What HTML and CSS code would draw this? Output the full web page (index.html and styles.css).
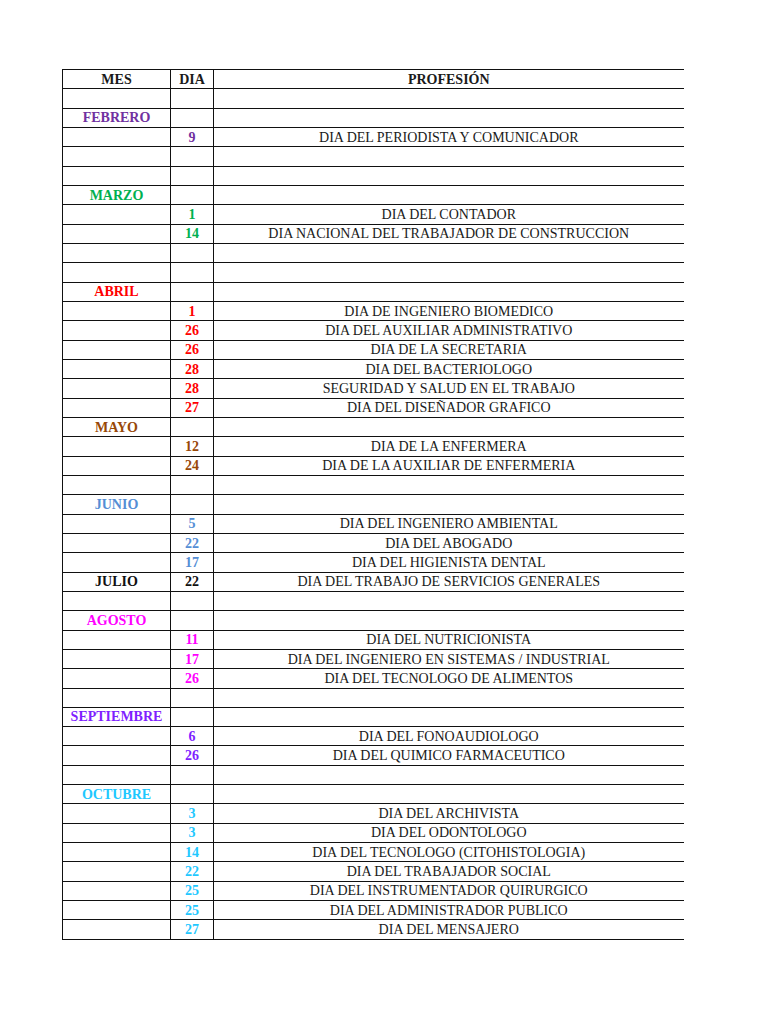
FILE: index.html
```html
<!DOCTYPE html>
<html lang="es">
<head>
<meta charset="utf-8">
<title>Calendario de profesiones</title>
<link rel="stylesheet" href="styles.css">
</head>
<body>
<table class="cal">
<colgroup><col class="c-mes"><col class="c-dia"><col class="c-prof"></colgroup>
<tr class="head"><td>MES</td><td>DIA</td><td>PROFESIÓN</td></tr>
<tr><td></td><td></td><td></td></tr>
<tr class="feb"><td class="m">FEBRERO</td><td></td><td></td></tr>
<tr class="feb"><td></td><td class="d">9</td><td>DIA DEL PERIODISTA Y COMUNICADOR</td></tr>
<tr><td></td><td></td><td></td></tr>
<tr><td></td><td></td><td></td></tr>
<tr class="mar"><td class="m">MARZO</td><td></td><td></td></tr>
<tr class="mar"><td></td><td class="d">1</td><td>DIA DEL CONTADOR</td></tr>
<tr class="mar"><td></td><td class="d">14</td><td>DIA NACIONAL DEL TRABAJADOR DE CONSTRUCCION</td></tr>
<tr><td></td><td></td><td></td></tr>
<tr><td></td><td></td><td></td></tr>
<tr class="abr"><td class="m">ABRIL</td><td></td><td></td></tr>
<tr class="abr"><td></td><td class="d">1</td><td>DIA DE INGENIERO BIOMEDICO</td></tr>
<tr class="abr"><td></td><td class="d">26</td><td>DIA DEL AUXILIAR ADMINISTRATIVO</td></tr>
<tr class="abr"><td></td><td class="d">26</td><td>DIA DE LA SECRETARIA</td></tr>
<tr class="abr"><td></td><td class="d">28</td><td>DIA DEL BACTERIOLOGO</td></tr>
<tr class="abr"><td></td><td class="d">28</td><td>SEGURIDAD Y SALUD EN EL TRABAJO</td></tr>
<tr class="abr"><td></td><td class="d">27</td><td>DIA DEL DISEÑADOR GRAFICO</td></tr>
<tr class="may"><td class="m">MAYO</td><td></td><td></td></tr>
<tr class="may"><td></td><td class="d">12</td><td>DIA DE LA ENFERMERA</td></tr>
<tr class="may"><td></td><td class="d">24</td><td>DIA DE LA AUXILIAR DE ENFERMERIA</td></tr>
<tr><td></td><td></td><td></td></tr>
<tr class="jun"><td class="m">JUNIO</td><td></td><td></td></tr>
<tr class="jun"><td></td><td class="d">5</td><td>DIA DEL INGENIERO AMBIENTAL</td></tr>
<tr class="jun"><td></td><td class="d">22</td><td>DIA DEL ABOGADO</td></tr>
<tr class="jun"><td></td><td class="d">17</td><td>DIA DEL HIGIENISTA DENTAL</td></tr>
<tr class="jul"><td class="m">JULIO</td><td class="d">22</td><td>DIA DEL TRABAJO DE SERVICIOS GENERALES</td></tr>
<tr><td></td><td></td><td></td></tr>
<tr class="ago"><td class="m">AGOSTO</td><td></td><td></td></tr>
<tr class="ago"><td></td><td class="d">11</td><td>DIA DEL NUTRICIONISTA</td></tr>
<tr class="ago"><td></td><td class="d">17</td><td>DIA DEL INGENIERO EN SISTEMAS / INDUSTRIAL</td></tr>
<tr class="ago"><td></td><td class="d">26</td><td>DIA DEL TECNOLOGO DE ALIMENTOS</td></tr>
<tr><td></td><td></td><td></td></tr>
<tr class="sep"><td class="m">SEPTIEMBRE</td><td></td><td></td></tr>
<tr class="sep"><td></td><td class="d">6</td><td>DIA DEL FONOAUDIOLOGO</td></tr>
<tr class="sep"><td></td><td class="d">26</td><td>DIA DEL QUIMICO FARMACEUTICO</td></tr>
<tr><td></td><td></td><td></td></tr>
<tr class="oct"><td class="m">OCTUBRE</td><td></td><td></td></tr>
<tr class="oct"><td></td><td class="d">3</td><td>DIA DEL ARCHIVISTA</td></tr>
<tr class="oct"><td></td><td class="d">3</td><td>DIA DEL ODONTOLOGO</td></tr>
<tr class="oct"><td></td><td class="d">14</td><td>DIA DEL TECNOLOGO (CITOHISTOLOGIA)</td></tr>
<tr class="oct"><td></td><td class="d">22</td><td>DIA DEL TRABAJADOR SOCIAL</td></tr>
<tr class="oct"><td></td><td class="d">25</td><td>DIA DEL INSTRUMENTADOR QUIRURGICO</td></tr>
<tr class="oct"><td></td><td class="d">25</td><td>DIA DEL ADMINISTRADOR PUBLICO</td></tr>
<tr class="oct"><td></td><td class="d">27</td><td>DIA DEL MENSAJERO</td></tr>
</table>
</body>
</html>
```
FILE: styles.css
```css
html, body {
  margin: 0;
  padding: 0;
  background: #ffffff;
}
body {
  padding: 69px 0 0 62px;
  font-family: "Liberation Serif", "Times New Roman", serif;
  font-size: 14px;
  color: #1a1a1a;
}
.cal {
  border-collapse: collapse;
  table-layout: fixed;
  width: 621px;
}
.c-mes { width: 108px; }
.c-dia { width: 43px; }
.c-prof { width: 470px; }
.cal td {
  height: 17.33px;
  padding: 1px 0 0 0;
  border: 1px solid #111111;
  text-align: center;
  vertical-align: middle;
  line-height: 16px;
  white-space: nowrap;
}
.cal td:last-child {
  border-right: none;
}
.head td {
  font-weight: bold;
}
.m, .d {
  font-weight: bold;
}
.feb .m, .feb .d { color: #7030a0; }
.mar .m, .mar .d { color: #00b050; }
.abr .m, .abr .d { color: #ff0000; }
.may .m, .may .d { color: #984807; }
.jun .m, .jun .d { color: #558ed5; }
.jul .m, .jul .d { color: #111111; }
.ago .m, .ago .d { color: #ff00ff; }
.sep .m, .sep .d { color: #7f1fff; }
.oct .m, .oct .d { color: #1fc8ff; }
```
